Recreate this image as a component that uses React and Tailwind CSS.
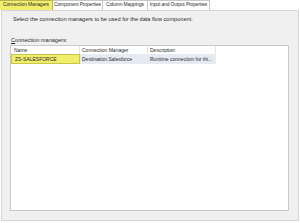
export default function App() {
  const tabs = [
    { label: "Connection Managers", w: "w-[53px]", active: true },
    { label: "Component Properties", w: "w-[50px]" },
    { label: "Column Mappings", w: "w-[45px]" },
    { label: "Input and Output Properties", w: "w-[62px]" },
  ];

  return (
    <div className="w-[300px] h-[223px] bg-white font-['Liberation_Sans',sans-serif] text-[5.6px] leading-none text-[#2a2a2a] flex flex-col overflow-hidden">
      <div className="flex h-[10px] items-stretch">
        {tabs.map((t) => (
          <div
            key={t.label}
            className={`${t.w} flex items-center justify-center whitespace-nowrap border-r border-t text-[4.9px] tracking-[-0.1px] ${
              t.active ? "bg-[#f2ee6c] border-[#b9b550]" : "bg-white border-[#c8c8c8]"
            }`}
          >
            {t.label}
          </div>
        ))}
      </div>

      <div className="flex-1 mx-[1px] mb-[2px] bg-[#f0f0f0] border border-[#d6d6d6] flex flex-col pl-[8px] pr-[9px]">
        <p className="mt-[6px] ml-[3px]">Select the connection managers to be used for the data flow component.</p>
        <p className="mt-[15px] ml-[1px]">
          <span className="underline">C</span>onnection managers:
        </p>
        <div className="mt-[2px] flex-1 bg-white border border-[#c9c9c9] flex flex-col text-[5px]">
          <div className="flex h-[8px] items-center">
            <div className="w-[69px] pl-[3px] border-r border-[#e3e3e3] h-full flex items-center">Name</div>
            <div className="w-[68px] pl-[2px] border-r border-[#e3e3e3] h-full flex items-center">Connection Manager</div>
            <div className="w-[68px] pl-[2px] border-r border-[#e3e3e3] h-full flex items-center">Description</div>
          </div>
          <div className="flex h-[10px] items-stretch">
            <div className="w-[69px] pl-[3px] bg-[#f2ee6c] border border-[#c9c64c] flex items-center">ZS-SALESFORCE</div>
            <div className="w-[68px] pl-[2px] bg-[#e6ebf3] flex items-center">Destination.Salesforce</div>
            <div className="w-[68px] pl-[2px] bg-[#e6ebf3] flex items-center whitespace-nowrap">Runtime connection for thi...</div>
          </div>
        </div>
        <div className="h-[9px]" />
      </div>
    </div>
  );
}
